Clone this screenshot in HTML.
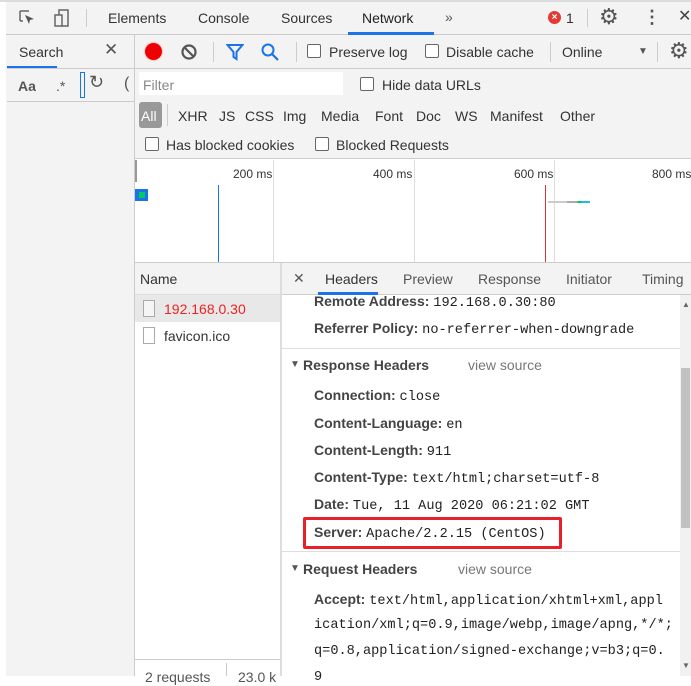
<!DOCTYPE html>
<html><head><style>
*{box-sizing:border-box;margin:0;padding:0}
body{width:691px;height:676px;overflow:hidden;background:#fff;font-family:"Liberation Sans",sans-serif;font-size:14px;color:#333;position:relative}
.a{position:absolute;white-space:nowrap;line-height:16px}
.m{font-family:"Liberation Mono",monospace;font-size:13.6px;color:#222}
.b{font-weight:bold;color:#444}
.cb{position:absolute;width:14px;height:14px;border:1px solid #666;border-radius:2px;background:#fff}
.g{color:#777}
.r{position:absolute}
</style></head><body>
<div class="r" style="left:0;top:0;width:691px;height:2px;background:#dcdcdc"></div>
<div class="r" style="left:6px;top:2px;width:685px;height:33px;background:#f3f3f3;border-bottom:1px solid #ccc"></div>
<svg class="r" style="left:16px;top:6px" width="60" height="24"><path d="M4 5h9M4 5v10M4 15h3" stroke="#666" stroke-width="1.5" fill="none"/><path d="M9 9l9 4-4 1-1 4z" fill="#555"/><rect x="39" y="9" width="7" height="11" stroke="#666" stroke-width="1.5" fill="none"/><path d="M43 9V4h9v16h-6" stroke="#666" stroke-width="1.5" fill="none"/></svg>
<div class="r" style="left:86px;top:9px;width:1px;height:18px;background:#ccc"></div>
<div class="a" style="left:108px;top:10px">Elements</div>
<div class="a" style="left:198px;top:10px">Console</div>
<div class="a" style="left:281px;top:10px">Sources</div>
<div class="a" style="left:362px;top:10px;color:#222">Network</div>
<div class="r" style="left:348px;top:32px;width:86px;height:3px;background:#1a73e8"></div>
<div class="a" style="left:445px;top:9px;color:#555">»</div>
<div class="r" style="left:548px;top:11px;width:13px;height:13px;border-radius:50%;background:#e53935;color:#fff;font-size:10px;line-height:13px;text-align:center;font-weight:bold">×</div>
<div class="a" style="left:566px;top:10px">1</div>
<div class="r" style="left:587px;top:9px;width:1px;height:18px;background:#ccc"></div>
<div class="a" style="left:599px;top:6px;font-size:22px;color:#555;line-height:22px">⚙</div>
<div class="a" style="left:643px;top:8px;font-size:18px;color:#555;font-weight:bold;line-height:18px">⋮</div>
<div class="a" style="left:678px;top:9px;font-size:16px;color:#444">✕</div>

<div class="r" style="left:6px;top:35px;width:129px;height:641px;background:#f3f3f3;border-right:1px solid #ccc"></div>
<div class="a" style="left:19px;top:44px">Search</div>
<div class="r" style="left:7px;top:66px;width:50px;height:2px;background:#1a73e8"></div>
<div class="a" style="left:104px;top:42px;font-size:17px;color:#555">✕</div>
<div class="r" style="left:7px;top:68px;width:127px;height:1px;background:#ccc"></div>
<div class="a" style="left:18px;top:78px;font-weight:bold;color:#555">Aa</div>
<div class="a" style="left:56px;top:78px;color:#555">.*</div>
<div class="r" style="left:80px;top:72px;width:5px;height:26px;border:1px solid #1a73e8"></div>
<div class="a" style="left:89px;top:74px;font-size:18px;color:#555">↻</div>
<div class="a" style="left:124px;top:76px;font-size:16px;color:#555">(</div>
<div class="r" style="left:7px;top:101px;width:127px;height:1px;background:#ccc"></div>

<div class="r" style="left:135px;top:35px;width:556px;height:124px;background:#f3f3f3;border-bottom:1px solid #ccc"></div>
<div class="r" style="left:135px;top:68px;width:556px;height:1px;background:#ccc"></div>
<div class="r" style="left:145px;top:43px;width:17px;height:17px;border-radius:50%;background:#e00;box-shadow:0 0 2px #f88"></div>
<svg class="r" style="left:180px;top:43px" width="18" height="18"><circle cx="9" cy="9" r="6.5" stroke="#555" stroke-width="2.2" fill="none"/><path d="M4.5 4.5l9 9" stroke="#555" stroke-width="2.2"/></svg>
<div class="r" style="left:213px;top:42px;width:1px;height:20px;background:#ccc"></div>
<svg class="r" style="left:226px;top:43px" width="18" height="18"><path d="M1.5 2h15l-6 7v7l-3-2V9z" stroke="#1a73e8" stroke-width="2" fill="none"/></svg>
<svg class="r" style="left:260px;top:42px" width="20" height="20"><circle cx="8" cy="8" r="5.5" stroke="#1a73e8" stroke-width="2" fill="none"/><path d="M12 12l6 6" stroke="#1a73e8" stroke-width="2.2"/></svg>
<div class="r" style="left:296px;top:42px;width:1px;height:20px;background:#ccc"></div>
<div class="cb" style="left:307px;top:44px"></div>
<div class="a" style="left:329px;top:44px">Preserve log</div>
<div class="cb" style="left:425px;top:44px"></div>
<div class="a" style="left:446px;top:44px">Disable cache</div>
<div class="r" style="left:550px;top:42px;width:1px;height:20px;background:#ccc"></div>
<div class="a" style="left:562px;top:44px">Online</div>
<div class="a" style="left:638px;top:44px;font-size:10px;color:#555">▼</div>
<div class="r" style="left:657px;top:42px;width:1px;height:20px;background:#ccc"></div>
<div class="a" style="left:669px;top:38px;font-size:22px;color:#555;line-height:26px">⚙</div>

<div class="r" style="left:139px;top:72px;width:204px;height:23px;background:#fff"></div>
<div class="a" style="left:143px;top:77px;color:#888">Filter</div>
<div class="cb" style="left:360px;top:77px"></div>
<div class="a" style="left:382px;top:77px">Hide data URLs</div>
<div class="r" style="left:139px;top:102px;width:23px;height:26px;background:#999;border-radius:3px"></div>
<div class="a" style="left:141px;top:108px;color:#fff">All</div>
<div class="r" style="left:167px;top:104px;width:1px;height:22px;background:#ccc"></div>
<div class="a" style="left:178px;top:108px">XHR</div>
<div class="a" style="left:219px;top:108px">JS</div>
<div class="a" style="left:245px;top:108px">CSS</div>
<div class="a" style="left:283px;top:108px">Img</div>
<div class="a" style="left:321px;top:108px">Media</div>
<div class="a" style="left:375px;top:108px">Font</div>
<div class="a" style="left:416px;top:108px">Doc</div>
<div class="a" style="left:455px;top:108px">WS</div>
<div class="a" style="left:490px;top:108px">Manifest</div>
<div class="a" style="left:560px;top:108px">Other</div>
<div class="cb" style="left:145px;top:137px"></div>
<div class="a" style="left:166px;top:137px">Has blocked cookies</div>
<div class="cb" style="left:315px;top:137px"></div>
<div class="a" style="left:336px;top:137px">Blocked Requests</div>

<div class="r" style="left:135px;top:160px;width:2px;height:22px;background:#999"></div>
<div class="r" style="left:273px;top:160px;width:1px;height:102px;background:#ddd"></div>
<div class="r" style="left:414px;top:160px;width:1px;height:102px;background:#ddd"></div>
<div class="r" style="left:554px;top:160px;width:1px;height:102px;background:#ddd"></div>
<div class="a" style="left:233px;top:166px;font-size:12px">200 ms</div>
<div class="a" style="left:373px;top:166px;font-size:12px">400 ms</div>
<div class="a" style="left:514px;top:166px;font-size:12px">600 ms</div>
<div class="a" style="left:652px;top:166px;font-size:12px">800 ms</div>
<div class="r" style="left:135px;top:189px;width:13px;height:12px;background:#1a73e8"></div>
<div class="r" style="left:139px;top:192px;width:6px;height:6px;background:#0c6"></div>
<div class="r" style="left:218px;top:185px;width:1px;height:77px;background:#1a73e8"></div>
<div class="r" style="left:545px;top:185px;width:1px;height:77px;background:#d33"></div>
<div class="r" style="left:548px;top:201px;width:42px;height:2px;background:linear-gradient(90deg,#ccc 0,#ccc 45%,#aaa 45%,#aaa 70%,#0c6 70%,#0c6 80%,#29b6f6 80%)"></div>
<div class="r" style="left:135px;top:262px;width:556px;height:1px;background:#ccc"></div>

<div class="r" style="left:135px;top:263px;width:145px;height:32px;background:#f3f3f3;border-bottom:1px solid #ddd"></div>
<div class="a" style="left:140px;top:271px">Name</div>
<div class="r" style="left:135px;top:295px;width:145px;height:27px;background:#e8e8e8"></div>
<div class="r" style="left:143px;top:300px;width:12px;height:17px;border:1px solid #aaa;background:#f5f5f5"></div>
<div class="a" style="left:164px;top:301px;color:#e22">192.168.0.30</div>
<div class="r" style="left:143px;top:327px;width:12px;height:17px;border:1px solid #aaa;background:#fff"></div>
<div class="a" style="left:164px;top:328px">favicon.ico</div>
<div class="r" style="left:280px;top:263px;width:2px;height:413px;background:#ddd"></div>
<div class="r" style="left:135px;top:659px;width:145px;height:1px;background:#ccc"></div>
<div class="a" style="left:145px;top:669px;color:#555">2 requests</div>
<div class="r" style="left:226px;top:663px;width:1px;height:13px;background:#ccc"></div>
<div class="a" style="left:238px;top:669px;color:#555">23.0 k</div>

<div class="r" style="left:282px;top:263px;width:409px;height:32px;background:#f3f3f3;border-bottom:1px solid #ccc"></div>
<div class="a" style="left:293px;top:270px;color:#555">✕</div>
<div class="a" style="left:325px;top:271px">Headers</div>
<div class="r" style="left:318px;top:292px;width:60px;height:3px;background:#1a73e8"></div>
<div class="a" style="left:403px;top:271px;color:#555">Preview</div>
<div class="a" style="left:478px;top:271px;color:#555">Response</div>
<div class="a" style="left:566px;top:271px;color:#555">Initiator</div>
<div class="a" style="left:642px;top:271px;color:#555">Timing</div>

<div class="a" style="left:314px;top:293px"><span class="b">Remote Address:</span> <span class="m">192.168.0.30:80</span></div>
<div class="a" style="left:314px;top:320px"><span class="b">Referrer Policy:</span> <span class="m">no-referrer-when-downgrade</span></div>
<div class="r" style="left:282px;top:348px;width:398px;height:1px;background:#ddd"></div>
<div class="a" style="left:290px;top:357px;font-size:10px;color:#555">▼</div>
<div class="a b" style="left:303px;top:357px">Response Headers</div>
<div class="a g" style="left:468px;top:357px">view source</div>
<div class="a" style="left:314px;top:387px"><span class="b">Connection:</span> <span class="m">close</span></div>
<div class="a" style="left:314px;top:415px"><span class="b">Content-Language:</span> <span class="m">en</span></div>
<div class="a" style="left:314px;top:442px"><span class="b">Content-Length:</span> <span class="m">911</span></div>
<div class="a" style="left:314px;top:469px"><span class="b">Content-Type:</span> <span class="m">text/html;charset=utf-8</span></div>
<div class="a" style="left:314px;top:496px"><span class="b">Date:</span> <span class="m">Tue, 11 Aug 2020 06:21:02 GMT</span></div>
<div class="r" style="left:303px;top:517px;width:259px;height:32px;border:3px solid #e8202a;border-radius:2px"></div>
<div class="a" style="left:314px;top:524px"><span class="b">Server:</span> <span class="m">Apache/2.2.15 (CentOS)</span></div>
<div class="r" style="left:282px;top:551px;width:398px;height:1px;background:#ddd"></div>
<div class="a" style="left:290px;top:561px;font-size:10px;color:#555">▼</div>
<div class="a b" style="left:303px;top:561px">Request Headers</div>
<div class="a g" style="left:458px;top:561px">view source</div>
<div class="a" style="left:314px;top:591px"><span class="b">Accept:</span> <span class="m">text/html,application/xhtml+xml,appl</span></div>
<div class="a m" style="left:314px;top:618px">ication/xml;q=0.9,image/webp,image/apng,*/*;</div>
<div class="a m" style="left:314px;top:644px">q=0.8,application/signed-exchange;v=b3;q=0.</div>
<div class="a m" style="left:314px;top:670px">9</div>
<div class="r" style="left:680px;top:295px;width:11px;height:381px;background:#f1f1f1"></div>
<div class="r" style="left:681px;top:368px;width:9px;height:160px;background:#c1c1c1"></div>
<div class="a" style="left:682px;top:297px;font-size:8px;color:#666">▲</div>
<div class="a" style="left:682px;top:658px;font-size:8px;color:#666">▼</div>
</body></html>
